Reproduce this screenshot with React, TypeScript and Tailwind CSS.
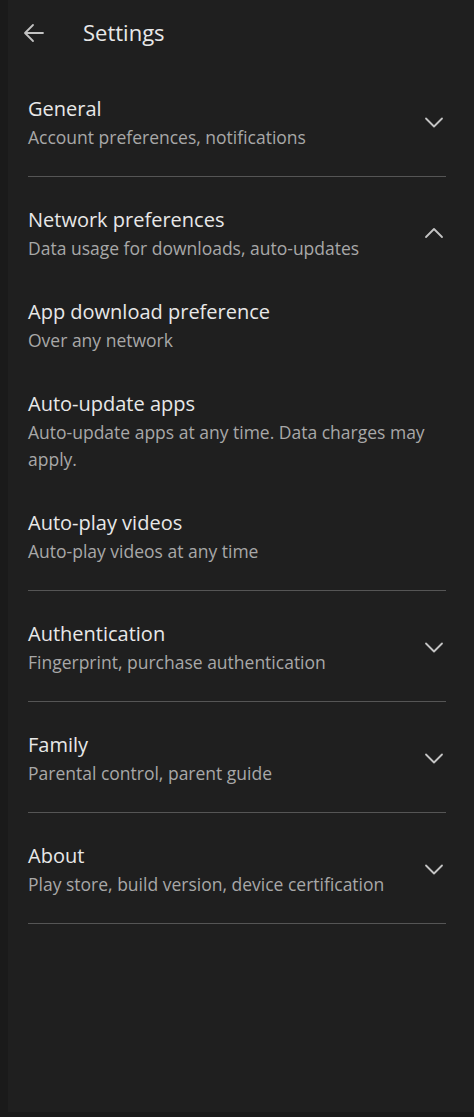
const sections = [
  {
    title: 'General',
    subtitle: 'Account preferences, notifications',
    open: false,
  },
  {
    title: 'Network preferences',
    subtitle: 'Data usage for downloads, auto-updates',
    open: true,
    items: [
      { title: 'App download preference', subtitle: 'Over any network' },
      {
        title: 'Auto-update apps',
        subtitle: 'Auto-update apps at any time. Data charges may apply.',
      },
      { title: 'Auto-play videos', subtitle: 'Auto-play videos at any time' },
    ],
  },
  {
    title: 'Authentication',
    subtitle: 'Fingerprint, purchase authentication',
    open: false,
  },
  {
    title: 'Family',
    subtitle: 'Parental control, parent guide',
    open: false,
  },
  {
    title: 'About',
    subtitle: 'Play store, build version, device certification',
    open: false,
  },
];

const Chevron = ({ up }: { up: boolean }) => (
  <svg
    width="24"
    height="24"
    viewBox="0 0 24 24"
    fill="none"
    stroke="#c4c4c4"
    strokeWidth="1.8"
    strokeLinecap="round"
    strokeLinejoin="round"
    className="shrink-0 -translate-y-[2px]"
  >
    {up ? <path d="M4 16l8-8 8 8" /> : <path d="M4 8.5l8 8 8-8" />}
  </svg>
);

const Row = ({ title, subtitle }: { title: string; subtitle: string }) => (
  <div className="flex flex-col">
    <div className="text-[20px] leading-[28px] text-[#e8e8e8] -translate-y-px">{title}</div>
    <div className="text-[17.5px] leading-[27px] text-[#a8a8a8]">{subtitle}</div>
  </div>
);

export default function App() {
  return (
    <div
      className="min-h-screen bg-[#1a1a1a] pl-2 pb-1"
      style={{ fontFamily: '"Open Sans", Roboto, sans-serif' }}
    >
      <div className="min-h-[1112px] bg-[#1f1f1f] pl-5 pr-7">
        <div className="flex h-[65px] items-center">
          <svg
            width="22"
            height="22"
            viewBox="0 0 22 22"
            fill="none"
            stroke="#c2c2c2"
            strokeWidth="1.8"
            strokeLinecap="round"
            strokeLinejoin="round"
            className="-ml-[5px]"
          >
            <path d="M20 11H2.5M10 3l-8 8 8 8" />
          </svg>
          <span className="ml-[38px] text-[22px] text-[#e8e8e8]">Settings</span>
        </div>

        {sections.map((s, i) => (
          <div key={s.title}>
            <div
              className={`flex flex-col gap-[37px] pb-[25px] ${
                i === 0 ? 'pt-[31px]' : 'pt-[30px]'
              }`}
            >
              <div className="flex items-center justify-between">
                <Row title={s.title} subtitle={s.subtitle} />
                <Chevron up={s.open} />
              </div>
              {s.open &&
                s.items?.map((it) => (
                  <Row key={it.title} title={it.title} subtitle={it.subtitle} />
                ))}
            </div>
            <div className="h-px bg-[#555555]" />
          </div>
        ))}
      </div>
    </div>
  );
}
